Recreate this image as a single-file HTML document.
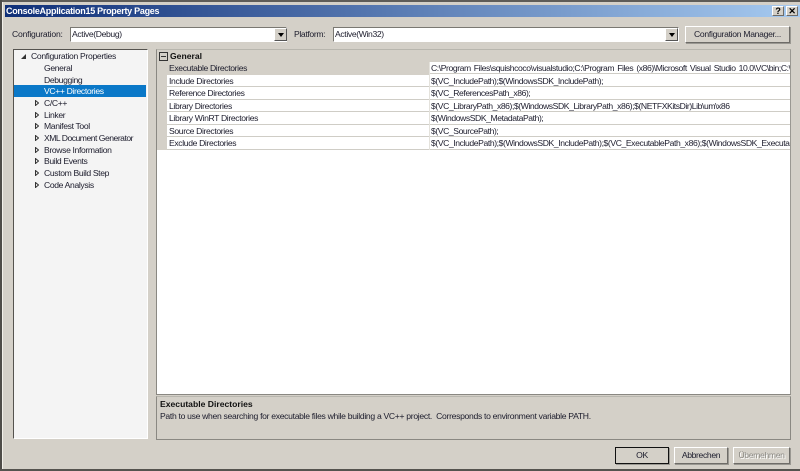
<!DOCTYPE html>
<html><head><meta charset="utf-8">
<style>
html,body{margin:0;padding:0;width:800px;height:471px;overflow:hidden;background:#d4d0c8}
body{position:relative;font:8.6px/12px "Liberation Sans",sans-serif;color:#1c1c2c;letter-spacing:-.36px}
div,span,svg{position:absolute;white-space:nowrap;box-sizing:border-box}
.wrap{left:0;top:0;width:800px;height:471px;overflow:hidden;filter:blur(.35px)}
.combo{background:#fff;border:1px solid;border-color:#7a7872 #fff #fff #7a7872;height:15px;top:27px;padding-left:1px;line-height:13px}
.arr{top:28px;width:13px;height:13px;background:#d4d0c8;border:1px solid;border-color:#fff #555 #555 #fff}
.arr:after{content:"";position:absolute;left:3px;top:4px;border:3px solid transparent;border-top:4px solid #000;border-bottom:0}
.btn{background:#d4d0c8;border:1px solid;border-color:#fff #6e6c68 #6e6c68 #fff;box-shadow:1px 1px 0 #9a9892;text-align:center;height:17px;line-height:15px}
.t{left:44px}
.r{left:167px;width:623px;height:12px;background:#fff;border-bottom:1px solid #cfcdc6}
.l{left:169px}
.v{left:431px;letter-spacing:-.42px}
.b{font-weight:bold;letter-spacing:0;color:#111}
.tri{left:35px;width:4px;height:6px}
</style></head><body><div class="wrap">
<div style="left:0;top:0;width:800px;height:2px;background:#5e5c58"></div>
<div style="left:0;top:0;width:2px;height:471px;background:#4e4c48"></div>
<div style="left:2px;top:2px;width:1px;height:467px;background:#f2f0ea"></div>
<div style="left:0;top:469px;width:800px;height:2px;background:#55534f"></div>
<div style="left:5px;top:5px;width:795px;height:12px;background:linear-gradient(90deg,#0f2f78 0,#a6caf0 100%)"></div>
<div style="left:6px;top:4px;font:bold 9px/14px 'Liberation Sans',sans-serif;letter-spacing:-.28px;color:#fff">ConsoleApplication15 Property Pages</div>
<div class="btn" style="left:772px;top:6px;width:12px;height:10px;line-height:9px;font-weight:bold;font-size:9px;color:#000;box-shadow:none">?</div>
<div class="btn" style="left:786px;top:6px;width:12px;height:10px;line-height:9px;font-weight:bold;font-size:9px;color:#000;box-shadow:none">✕</div>

<div style="left:12px;top:28px;letter-spacing:-.2px">Configuration:</div>
<div class="combo" style="left:70px;width:217px">Active(Debug)</div>
<div class="arr" style="left:274px"></div>
<div style="left:294px;top:28px">Platform:</div>
<div class="combo" style="left:333px;width:346px">Active(Win32)</div>
<div class="arr" style="left:665px"></div>
<div class="btn" style="left:685px;top:26px;width:105px;letter-spacing:-.3px">Configuration Manager...</div>

<div style="left:13px;top:49px;width:135px;height:390px;background:#f4f4f4;border:1px solid;border-color:#55534f #fff #fff #55534f"></div>
<div style="left:14px;top:85px;width:132px;height:12px;background:#0a78c8"></div>
<div style="left:21px;top:54px;width:0;height:0;border-left:5px solid transparent;border-bottom:5px solid #333"></div>
<div style="left:31px;top:50px;letter-spacing:-.32px">Configuration Properties</div>
<div class="t" style="top:62px">General</div>
<div class="t" style="top:74px">Debugging</div>
<div class="t" style="top:85px;color:#fff">VC++ Directories</div>
<svg class="tri" style="top:100px" viewBox="0 0 4 6"><path d="M.5.5V5.5L3.5 3Z" fill="#f4f4f4" stroke="#333"/></svg><div class="t" style="top:97px">C/C++</div>
<svg class="tri" style="top:112px" viewBox="0 0 4 6"><path d="M.5.5V5.5L3.5 3Z" fill="#f4f4f4" stroke="#333"/></svg><div class="t" style="top:109px">Linker</div>
<svg class="tri" style="top:123px" viewBox="0 0 4 6"><path d="M.5.5V5.5L3.5 3Z" fill="#f4f4f4" stroke="#333"/></svg><div class="t" style="top:120px">Manifest Tool</div>
<svg class="tri" style="top:135px" viewBox="0 0 4 6"><path d="M.5.5V5.5L3.5 3Z" fill="#f4f4f4" stroke="#333"/></svg><div class="t" style="top:132px;letter-spacing:-.5px">XML Document Generator</div>
<svg class="tri" style="top:147px" viewBox="0 0 4 6"><path d="M.5.5V5.5L3.5 3Z" fill="#f4f4f4" stroke="#333"/></svg><div class="t" style="top:144px">Browse Information</div>
<svg class="tri" style="top:158px" viewBox="0 0 4 6"><path d="M.5.5V5.5L3.5 3Z" fill="#f4f4f4" stroke="#333"/></svg><div class="t" style="top:155px">Build Events</div>
<svg class="tri" style="top:170px" viewBox="0 0 4 6"><path d="M.5.5V5.5L3.5 3Z" fill="#f4f4f4" stroke="#333"/></svg><div class="t" style="top:167px">Custom Build Step</div>
<svg class="tri" style="top:182px" viewBox="0 0 4 6"><path d="M.5.5V5.5L3.5 3Z" fill="#f4f4f4" stroke="#333"/></svg><div class="t" style="top:179px">Code Analysis</div>

<div style="left:156px;top:49px;width:635px;height:346px;background:#fff;border:1px solid;border-color:#b8b6ae #9a9892 #8a8882 #8a8882"></div>
<div style="left:157px;top:50px;width:633px;height:12px;background:#d4d0c8"></div>
<div style="left:157px;top:62px;width:10px;height:88px;background:#d4d0c8"></div>
<div style="left:159px;top:52px;width:9px;height:9px;border:1px solid #333"></div>
<div style="left:161px;top:56px;width:5px;height:1px;background:#333"></div>
<div class="b" style="left:170px;top:50px">General</div>

<div class="r" style="top:62px;background:#fff"></div>
<div style="left:167px;top:62px;width:262px;height:13px;background:#d4d0c8"></div>
<div class="r" style="top:75px"></div>
<div class="r" style="top:87px;height:13px"></div>
<div class="r" style="top:100px"></div>
<div class="r" style="top:112px;height:13px"></div>
<div class="r" style="top:125px"></div>
<div class="r" style="top:137px;height:13px"></div>
<div style="left:429px;top:62px;width:1px;height:88px;background:#e4e2dc"></div>

<div class="l" style="top:62px">Executable Directories</div>
<div class="l" style="top:75px">Include Directories</div>
<div class="l" style="top:87px">Reference Directories</div>
<div class="l" style="top:100px">Library Directories</div>
<div class="l" style="top:112px">Library WinRT Directories</div>
<div class="l" style="top:125px">Source Directories</div>
<div class="l" style="top:137px">Exclude Directories</div>

<div style="left:431px;top:62px;width:359px;height:12px;overflow:hidden;letter-spacing:-.42px;word-spacing:1.1px"><span style="left:0;top:0">C:\Program Files\squishcoco\visualstudio;C:\Program Files (x86)\Microsoft Visual Studio 10.0\VC\bin;C:\</span></div>
<div class="v" style="top:75px">$(VC_IncludePath);$(WindowsSDK_IncludePath);</div>
<div class="v" style="top:87px">$(VC_ReferencesPath_x86);</div>
<div class="v" style="top:100px">$(VC_LibraryPath_x86);$(WindowsSDK_LibraryPath_x86);$(NETFXKitsDir)Lib\um\x86</div>
<div class="v" style="top:112px">$(WindowsSDK_MetadataPath);</div>
<div class="v" style="top:125px">$(VC_SourcePath);</div>
<div style="left:431px;top:137px;width:359px;height:12px;overflow:hidden;letter-spacing:-.41px"><span style="left:0;top:0">$(VC_IncludePath);$(WindowsSDK_IncludePath);$(VC_ExecutablePath_x86);$(WindowsSDK_ExecutablePath_x86);</span></div>

<div style="left:156px;top:396px;width:635px;height:44px;border:1px solid;border-color:#b8b6ae #8a8882 #8a8882 #8a8882"></div>
<div class="b" style="left:160px;top:398px">Executable Directories</div>
<div style="left:160px;top:410px;letter-spacing:-.31px">Path to use when searching for executable files while building a VC++ project.&nbsp; Corresponds to environment variable PATH.</div>

<div class="btn" style="left:615px;top:447px;width:54px;border:1px solid #111;line-height:15px">OK</div>
<div class="btn" style="left:674px;top:447px;width:54px">Abbrechen</div>
<div class="btn" style="left:733px;top:447px;width:57px;color:#8c8a84;text-shadow:1px 1px 0 #fff">Übernehmen</div>
</div></body></html>
